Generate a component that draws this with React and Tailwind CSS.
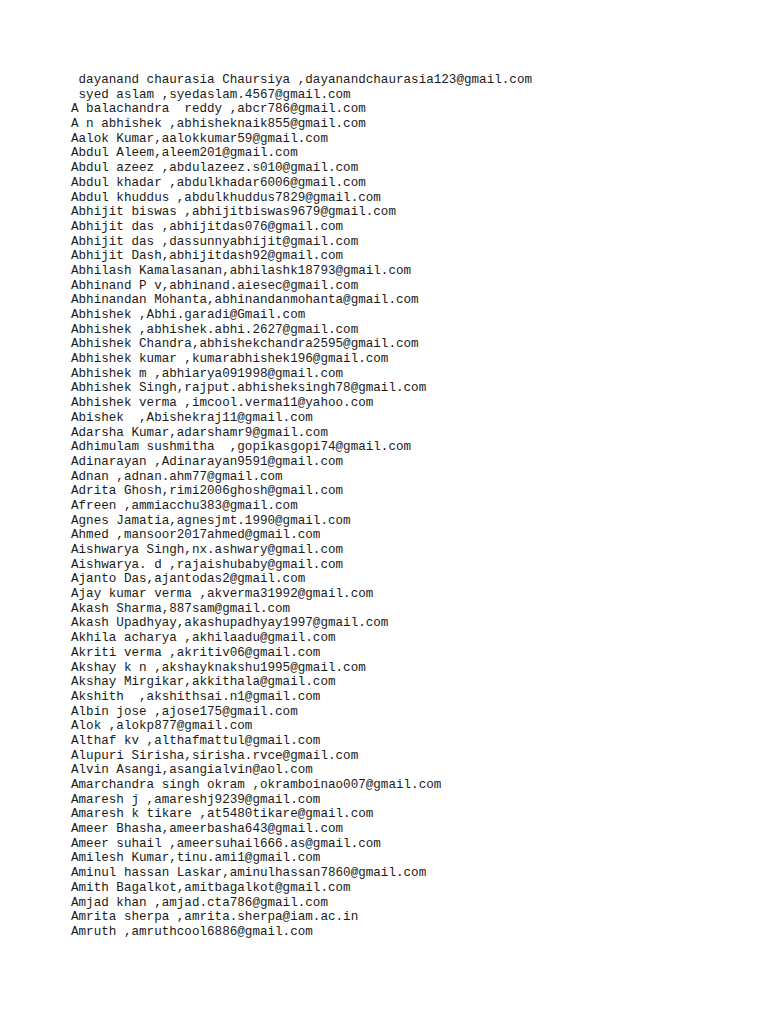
import React from 'react';

const LINES = [
  ' dayanand chaurasia Chaursiya ,dayanandchaurasia123@gmail.com',
  ' syed aslam ,syedaslam.4567@gmail.com',
  'A balachandra  reddy ,abcr786@gmail.com',
  'A n abhishek ,abhisheknaik855@gmail.com',
  'Aalok Kumar,aalokkumar59@gmail.com',
  'Abdul Aleem,aleem201@gmail.com',
  'Abdul azeez ,abdulazeez.s010@gmail.com',
  'Abdul khadar ,abdulkhadar6006@gmail.com',
  'Abdul khuddus ,abdulkhuddus7829@gmail.com',
  'Abhijit biswas ,abhijitbiswas9679@gmail.com',
  'Abhijit das ,abhijitdas076@gmail.com',
  'Abhijit das ,dassunnyabhijit@gmail.com',
  'Abhijit Dash,abhijitdash92@gmail.com',
  'Abhilash Kamalasanan,abhilashk18793@gmail.com',
  'Abhinand P v,abhinand.aiesec@gmail.com',
  'Abhinandan Mohanta,abhinandanmohanta@gmail.com',
  'Abhishek ,Abhi.garadi@Gmail.com',
  'Abhishek ,abhishek.abhi.2627@gmail.com',
  'Abhishek Chandra,abhishekchandra2595@gmail.com',
  'Abhishek kumar ,kumarabhishek196@gmail.com',
  'Abhishek m ,abhiarya091998@gmail.com',
  'Abhishek Singh,rajput.abhisheksingh78@gmail.com',
  'Abhishek verma ,imcool.verma11@yahoo.com',
  'Abishek  ,Abishekraj11@gmail.com',
  'Adarsha Kumar,adarshamr9@gmail.com',
  'Adhimulam sushmitha  ,gopikasgopi74@gmail.com',
  'Adinarayan ,Adinarayan9591@gmail.com',
  'Adnan ,adnan.ahm77@gmail.com',
  'Adrita Ghosh,rimi2006ghosh@gmail.com',
  'Afreen ,ammiacchu383@gmail.com',
  'Agnes Jamatia,agnesjmt.1990@gmail.com',
  'Ahmed ,mansoor2017ahmed@gmail.com',
  'Aishwarya Singh,nx.ashwary@gmail.com',
  'Aishwarya. d ,rajaishubaby@gmail.com',
  'Ajanto Das,ajantodas2@gmail.com',
  'Ajay kumar verma ,akverma31992@gmail.com',
  'Akash Sharma,887sam@gmail.com',
  'Akash Upadhyay,akashupadhyay1997@gmail.com',
  'Akhila acharya ,akhilaadu@gmail.com',
  'Akriti verma ,akritiv06@gmail.com',
  'Akshay k n ,akshayknakshu1995@gmail.com',
  'Akshay Mirgikar,akkithala@gmail.com',
  'Akshith  ,akshithsai.n1@gmail.com',
  'Albin jose ,ajose175@gmail.com',
  'Alok ,alokp877@gmail.com',
  'Althaf kv ,althafmattul@gmail.com',
  'Alupuri Sirisha,sirisha.rvce@gmail.com',
  'Alvin Asangi,asangialvin@aol.com',
  'Amarchandra singh okram ,okramboinao007@gmail.com',
  'Amaresh j ,amareshj9239@gmail.com',
  'Amaresh k tikare ,at5480tikare@gmail.com',
  'Ameer Bhasha,ameerbasha643@gmail.com',
  'Ameer suhail ,ameersuhail666.as@gmail.com',
  'Amilesh Kumar,tinu.ami1@gmail.com',
  'Aminul hassan Laskar,aminulhassan7860@gmail.com',
  'Amith Bagalkot,amitbagalkot@gmail.com',
  'Amjad khan ,amjad.cta786@gmail.com',
  'Amrita sherpa ,amrita.sherpa@iam.ac.in',
  'Amruth ,amruthcool6886@gmail.com',
];

export default function App() {
  return (
    <div className="w-[768px] h-[1024px] bg-white overflow-hidden pl-[71px] pt-[73px]">
      <div className="font-['Liberation_Mono',monospace] text-[12.6px] leading-[14.69px] text-[#1a1a1a] whitespace-pre">
        {LINES.map((line, i) => (
          <div key={i}>{line}</div>
        ))}
      </div>
    </div>
  );
}
